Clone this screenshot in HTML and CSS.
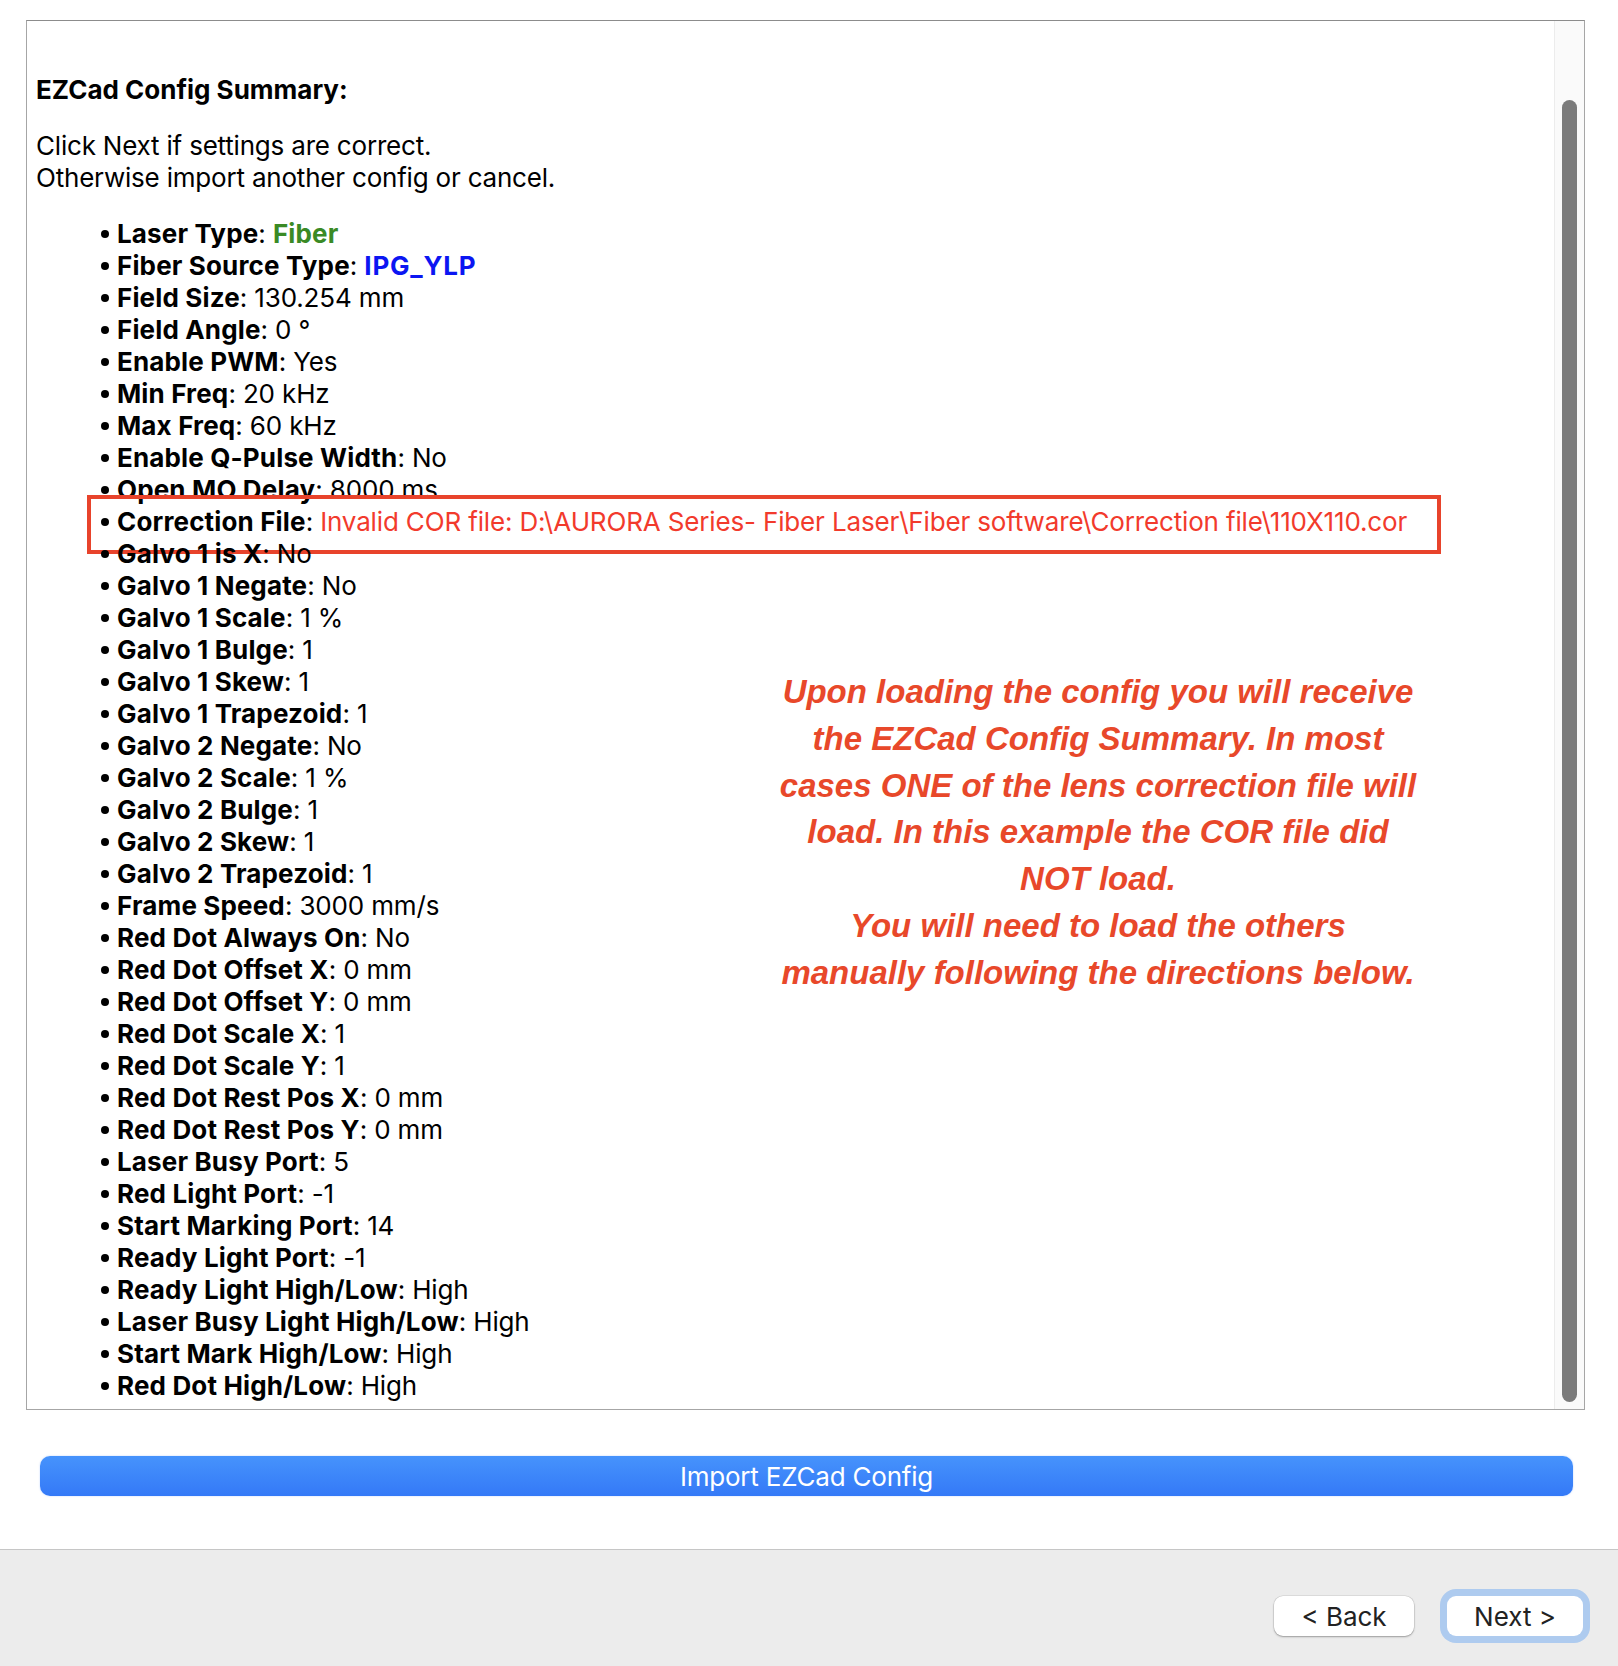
FILE: index.html
```html
<!DOCTYPE html>
<html lang="en">
<head>
<meta charset="utf-8">
<title>EZCad Config Summary</title>
<link rel="stylesheet" href="styles.css">
</head>
<body>
<div class="window">
  <main class="main">
    <section class="panel">
      <div class="scroll-content">
        <h2 class="title">EZCad Config Summary:</h2>
        <p class="intro">Click Next if settings are correct.<br>Otherwise import another config or cancel.</p>
        <ul class="summary">
          <li><span class="t"><b>Laser Type</b>: <b class="green">Fiber</b></span></li>
          <li><span class="t"><b>Fiber Source Type</b>: <b class="blue">IPG_YLP</b></span></li>
          <li><span class="t"><b>Field Size</b>: 130.254 mm</span></li>
          <li><span class="t"><b>Field Angle</b>: 0 °</span></li>
          <li><span class="t"><b>Enable PWM</b>: Yes</span></li>
          <li><span class="t"><b>Min Freq</b>: 20 kHz</span></li>
          <li><span class="t"><b>Max Freq</b>: 60 kHz</span></li>
          <li><span class="t"><b>Enable Q-Pulse Width</b>: No</span></li>
          <li><span class="t"><b>Open MO Delay</b>: 8000 ms</span></li>
          <li class="highlight"><span class="t"><b>Correction File</b>: <span class="red">Invalid COR file: D:\AURORA Series- Fiber Laser\Fiber software\Correction file\110X110.cor</span></span></li>
          <li><span class="t"><b>Galvo 1 is X</b>: No</span></li>
          <li><span class="t"><b>Galvo 1 Negate</b>: No</span></li>
          <li><span class="t"><b>Galvo 1 Scale</b>: 1 %</span></li>
          <li><span class="t"><b>Galvo 1 Bulge</b>: 1</span></li>
          <li><span class="t"><b>Galvo 1 Skew</b>: 1</span></li>
          <li><span class="t"><b>Galvo 1 Trapezoid</b>: 1</span></li>
          <li><span class="t"><b>Galvo 2 Negate</b>: No</span></li>
          <li><span class="t"><b>Galvo 2 Scale</b>: 1 %</span></li>
          <li><span class="t"><b>Galvo 2 Bulge</b>: 1</span></li>
          <li><span class="t"><b>Galvo 2 Skew</b>: 1</span></li>
          <li><span class="t"><b>Galvo 2 Trapezoid</b>: 1</span></li>
          <li><span class="t"><b>Frame Speed</b>: 3000 mm/s</span></li>
          <li><span class="t"><b>Red Dot Always On</b>: No</span></li>
          <li><span class="t"><b>Red Dot Offset X</b>: 0 mm</span></li>
          <li><span class="t"><b>Red Dot Offset Y</b>: 0 mm</span></li>
          <li><span class="t"><b>Red Dot Scale X</b>: 1</span></li>
          <li><span class="t"><b>Red Dot Scale Y</b>: 1</span></li>
          <li><span class="t"><b>Red Dot Rest Pos X</b>: 0 mm</span></li>
          <li><span class="t"><b>Red Dot Rest Pos Y</b>: 0 mm</span></li>
          <li><span class="t"><b>Laser Busy Port</b>: 5</span></li>
          <li><span class="t"><b>Red Light Port</b>: -1</span></li>
          <li><span class="t"><b>Start Marking Port</b>: 14</span></li>
          <li><span class="t"><b>Ready Light Port</b>: -1</span></li>
          <li><span class="t"><b>Ready Light High/Low</b>: High</span></li>
          <li><span class="t"><b>Laser Busy Light High/Low</b>: High</span></li>
          <li><span class="t"><b>Start Mark High/Low</b>: High</span></li>
          <li><span class="t"><b>Red Dot High/Low</b>: High</span></li>
        </ul>
        <div class="note">Upon loading the config you will receive<br>the EZCad Config Summary. In most<br>cases ONE of the lens correction file will<br>load. In this example the COR file did<br>NOT load.<br>You will need to load the others<br>manually following the directions below.</div>
      </div>
      <div class="scrollbar"><div class="thumb"></div></div>
    </section>
    <div class="import-row">
      <button class="import" type="button">Import EZCad Config</button>
    </div>
  </main>
  <footer class="footer">
    <button class="nav-btn" type="button">&lt; Back</button>
    <button class="nav-btn next" type="button">Next &gt;</button>
  </footer>
</div>
</body>
</html>
```
FILE: styles.css
```css
* { box-sizing: border-box; }
html, body { margin: 0; padding: 0; }
body {
  width: 1618px;
  height: 1666px;
  background: #ffffff;
  font-family: Inter, "Liberation Sans", "DejaVu Sans", sans-serif;
  font-size: 26px;
  color: #000;
  overflow: hidden;
}
.window {
  display: flex;
  flex-direction: column;
  height: 1666px;
}
.main {
  padding: 20px 33px 0 26px;
  height: 1549px;
}
.panel {
  display: flex;
  height: 1390px;
  border: 1px solid #a6a6a6;
  border-top-color: #8c8c8c;
  background: #fff;
  overflow: hidden;
}
.scroll-content {
  position: relative;
  flex: 1;
  padding: 53px 0 0 9px;
  overflow: hidden;
}
.title {
  margin: 0;
  font-size: 26px;
  line-height: 32px;
  font-weight: 700;
}
.intro {
  margin: 24px 0 0;
  line-height: 32px;
  letter-spacing: -0.2px;
}
.summary {
  list-style: none;
  margin: 24px 0 0;
  padding: 0 0 0 65px;
  line-height: 32px;
}
.summary li {
  position: relative;
  display: flex;
  align-items: center;
  height: 32px;
  white-space: nowrap;
}
.summary li::before {
  content: "";
  flex: none;
  width: 8px;
  height: 8px;
  border-radius: 50%;
  background: #000;
  margin-right: 8px;
}
.summary .t { letter-spacing: -0.15px; }
.summary b { font-weight: 700; letter-spacing: 0.15px; }
.green { color: #3a8a25; }
.blue { color: #0b16f2; letter-spacing: 0.8px !important; }
.red { color: #f23a2c; }
.highlight::after {
  content: "";
  position: absolute;
  left: -14px;
  top: -11px;
  width: 1346px;
  height: 51px;
  border: 4px solid #e8432b;
}
.note {
  position: absolute;
  left: 721px;
  top: 648px;
  width: 700px;
  text-align: center;
  font-family: "Liberation Sans", Arial, sans-serif;
  font-weight: 700;
  font-style: italic;
  font-size: 33px;
  line-height: 46.75px;
  color: #e8482a;
}
.scrollbar {
  flex: none;
  width: 30px;
  background: #fafafa;
  border-left: 1px solid #ececec;
  padding: 79px 0 7px 7px;
}
.thumb {
  width: 15px;
  height: 100%;
  border-radius: 8px;
  background: #7b7b7b;
}
.import-row {
  padding: 46px 12px 0 14px;
}
.import {
  display: block;
  width: 100%;
  height: 40px;
  border: none;
  border-radius: 10px;
  background: linear-gradient(#4693fc, #3479f7);
  box-shadow: 0 0 2px rgba(60, 130, 250, 0.35);
  color: #fff;
  font-family: inherit;
  font-size: 26px;
  letter-spacing: -0.2px;
  padding: 0;
}
.footer {
  flex: 1;
  display: flex;
  justify-content: flex-end;
  align-items: flex-start;
  gap: 33px;
  padding: 46px 35px 0 0;
  background: #ececec;
  border-top: 1px solid #c6c6c6;
}
.nav-btn {
  width: 140px;
  height: 40px;
  border: none;
  border-radius: 9px;
  background: #fff;
  box-shadow: 0 1px 2px rgba(0, 0, 0, 0.3), 0 0 0 0.5px rgba(0, 0, 0, 0.12);
  font-family: inherit;
  font-size: 26px;
  color: #222;
  padding: 0;
}
.nav-btn.next {
  width: 136px;
  box-shadow: 0 0 0 7px #aecbef, 0 1px 2px rgba(0, 0, 0, 0.3);
}
```
